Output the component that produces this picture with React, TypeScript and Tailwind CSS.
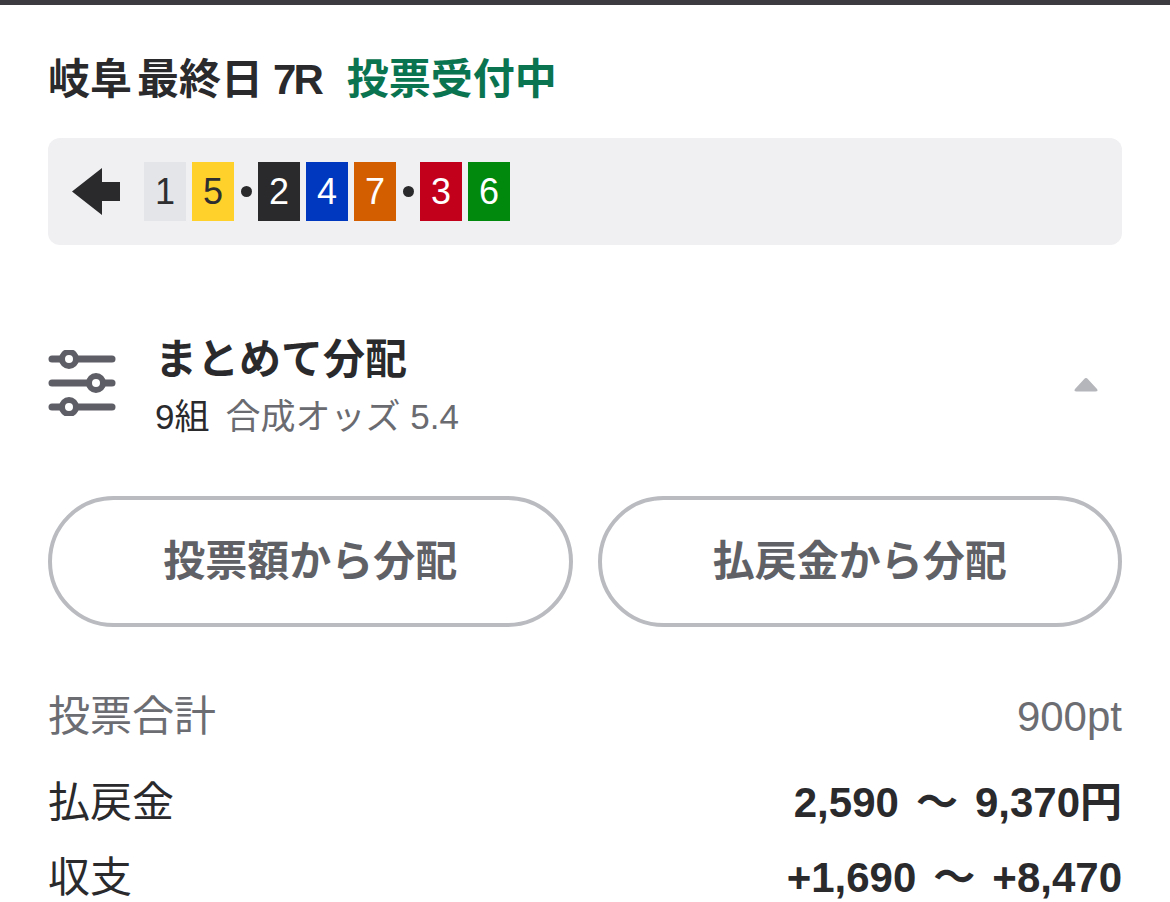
import React from "react";

type Horse = { n: number; bg: string; fg: string };

const groups: Horse[][] = [
  [
    { n: 1, bg: "bg-[#e4e5e8]", fg: "text-[#2e2e31]" },
    { n: 5, bg: "bg-[#ffd12a]", fg: "text-[#2e2e31]" },
  ],
  [
    { n: 2, bg: "bg-[#2a2a2d]", fg: "text-white" },
    { n: 4, bg: "bg-[#0038c0]", fg: "text-white" },
    { n: 7, bg: "bg-[#d35e00]", fg: "text-white" },
  ],
  [
    { n: 3, bg: "bg-[#c3001c]", fg: "text-white" },
    { n: 6, bg: "bg-[#00890c]", fg: "text-white" },
  ],
];

function ArrowLeft() {
  return (
    <svg width="48" height="47" viewBox="0 0 48 47" className="shrink-0">
      <path d="M0 23.5 L30 0 L30 14 L48 14 L48 33 L30 33 L30 47 Z" fill="#2a2a2d" />
    </svg>
  );
}

function SlidersIcon() {
  return (
    <svg width="68" height="66" viewBox="0 0 68 66" className="shrink-0">
      <g stroke="#5e5f66" strokeWidth="7" strokeLinecap="round" fill="none">
        <line x1="4" y1="9" x2="64" y2="9" />
        <line x1="4" y1="33" x2="64" y2="33" />
        <line x1="4" y1="57" x2="64" y2="57" />
      </g>
      <g fill="#ffffff" stroke="#5e5f66" strokeWidth="6">
        <circle cx="21" cy="9" r="7" />
        <circle cx="48" cy="33" r="7" />
        <circle cx="21" cy="57" r="7" />
      </g>
    </svg>
  );
}

function Range({ from, to }: { from: string; to: string }) {
  return (
    <span className="font-bold flex items-center">
      <span>{from}</span>
      <span className="mx-[17px]">〜</span>
      <span>{to}</span>
    </span>
  );
}

export default function App() {
  const font = { fontFamily: '"Liberation Sans", "Noto Sans CJK JP", sans-serif' };

  return (
    <div className="w-[1170px] h-[902px] bg-white overflow-hidden text-[#2a2a2d]" style={font}>
      <div className="h-[5px] bg-[#3c3c40]" />

      <div className="px-[48px]">
        <div className="mt-[50px] h-[50px] flex items-center text-[42px] font-bold leading-[50px]">
          <span>岐阜</span>
          <span className="ml-[5px]">最終日</span>
          <span className="ml-[10px] tracking-[-3px]">7R</span>
          <span className="ml-[26px] text-[#0a7350]">投票受付中</span>
        </div>

        <div className="mt-[33px] h-[107px] rounded-[12px] bg-[#f0f0f3] flex items-center pl-[24px]">
          <ArrowLeft />
          <div className="ml-[24px] flex items-center">
            {groups.map((g, gi) => (
              <React.Fragment key={gi}>
                {gi > 0 && (
                  <div className="w-[24px] flex justify-center">
                    <div className="w-[11px] h-[11px] rounded-full bg-[#2a2a2d]" />
                  </div>
                )}
                <div className="flex gap-[6px]">
                  {g.map((h) => (
                    <div
                      key={h.n}
                      className={`w-[42px] h-[59px] flex items-center justify-center text-[36px] leading-none ${h.bg} ${h.fg}`}
                    >
                      {h.n}
                    </div>
                  ))}
                </div>
              </React.Fragment>
            ))}
          </div>
        </div>

        <div className="mt-[90px] flex items-start">
          <div className="mt-[15px]">
            <SlidersIcon />
          </div>
          <div className="ml-[39px] flex flex-col flex-1">
            <div className="h-[50px] leading-[50px] text-[42px] font-bold">まとめて分配</div>
            <div className="mt-[10px] h-[44px] leading-[44px] text-[35px]">
              <span>9組</span>
              <span className="ml-[16px] text-[#6a6b71]">合成オッズ 5.4</span>
            </div>
          </div>
          <div className="mt-[42px] mr-[23px]">
            <svg width="26" height="16" viewBox="0 0 26 16">
              <path d="M11 2.2 Q13 0 15 2.2 L24 12 Q25.5 14.5 22.5 14.5 L3.5 14.5 Q0.5 14.5 2 12 Z" fill="#b4b6bb" />
            </svg>
          </div>
        </div>

        <div className="mt-[57px] grid grid-cols-2 gap-[25px]">
          {["投票額から分配", "払戻金から分配"].map((t) => (
            <button
              key={t}
              className="h-[131px] rounded-full border-[4px] border-[#b9bbc0] bg-white text-[42px] font-bold text-[#606167]"
            >
              {t}
            </button>
          ))}
        </div>

        <div className="mt-[64px] h-[50px] flex items-center justify-between text-[42px] text-[#6c6d73]">
          <span>投票合計</span>
          <span>900pt</span>
        </div>
        <div className="mt-[36px] h-[50px] flex items-center justify-between text-[42px]">
          <span>払戻金</span>
          <Range from="2,590" to="9,370円" />
        </div>
        <div className="mt-[25px] h-[50px] flex items-center justify-between text-[42px]">
          <span>収支</span>
          <Range from="+1,690" to="+8,470" />
        </div>
      </div>
    </div>
  );
}
